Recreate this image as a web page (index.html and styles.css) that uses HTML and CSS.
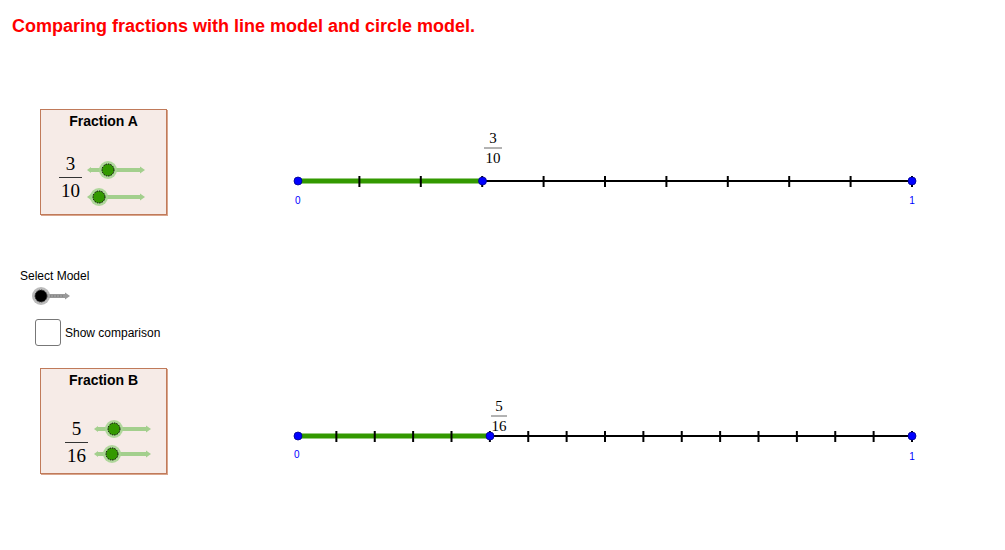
FILE: index.html
```html
<!DOCTYPE html>
<html>
<head>
<meta charset="utf-8">
<link rel="stylesheet" href="styles.css">
</head>
<body>
<div class="applet">
  <h1 class="title">Comparing fractions with line model and circle model.</h1>

  <div class="panel panel-a">
    <div class="panel-title">Fraction A</div>
  </div>
  <div class="frac frac-a"><span class="num">3</span><span class="den">10</span></div>

  <div class="panel panel-b">
    <div class="panel-title">Fraction B</div>
  </div>
  <div class="frac frac-b"><span class="num">5</span><span class="den">16</span></div>

  <div class="label select-label">Select Model</div>
  <div class="check-row">
    <span class="checkbox"></span>
    <span class="label">Show comparison</span>
  </div>

  <svg class="canvas" width="1005" height="550" viewBox="0 0 1005 550">
    <defs>
      <g id="knob">
        <circle r="9" fill="#a9d594" opacity="0.9"/>
        <circle r="6" fill="#339900" stroke="#000" stroke-width="1" stroke-dasharray="1.5 1"/>
      </g>
    </defs>

    <!-- Slider A numerator -->
    <g>
      <line x1="90" y1="170" x2="141" y2="170" stroke="#a3cf8d" stroke-width="4"/>
      <polygon points="87,170 91,167 91,173" fill="#a3cf8d"/>
      <polygon points="145,170 140,166.5 140,173.5" fill="#a3cf8d"/>
      <use href="#knob" x="108" y="170"/>
    </g>
    <!-- Slider A denominator -->
    <g>
      <line x1="90" y1="197" x2="141" y2="197" stroke="#a3cf8d" stroke-width="4"/>
      <polygon points="87,197 91,194 91,200" fill="#a3cf8d"/>
      <polygon points="145,197 140,193.5 140,200.5" fill="#a3cf8d"/>
      <use href="#knob" x="99" y="197"/>
    </g>
    <!-- Slider B numerator -->
    <g>
      <line x1="97" y1="429" x2="146" y2="429" stroke="#a3cf8d" stroke-width="4"/>
      <polygon points="94,429 98,426 98,432" fill="#a3cf8d"/>
      <polygon points="151,429 146,425.5 146,432.5" fill="#a3cf8d"/>
      <use href="#knob" x="114" y="429"/>
    </g>
    <!-- Slider B denominator -->
    <g>
      <line x1="97" y1="454" x2="146" y2="454" stroke="#a3cf8d" stroke-width="4"/>
      <polygon points="94,454 98,451 98,457" fill="#a3cf8d"/>
      <polygon points="151,454 146,450.5 146,457.5" fill="#a3cf8d"/>
      <use href="#knob" x="112" y="454"/>
    </g>

    <!-- Select model slider -->
    <g>
      <line x1="41" y1="296" x2="66" y2="296" stroke="#999" stroke-width="4"/>
      <polygon points="70,296 65,292.5 65,299.5" fill="#999"/>
      <line x1="50" y1="296" x2="64" y2="296" stroke="#777" stroke-width="1" stroke-dasharray="1 2"/>
      <circle cx="41" cy="296" r="9" fill="#aaa" opacity="0.8"/>
      <circle cx="41" cy="296" r="6" fill="#000" stroke="#333" stroke-width="1" stroke-dasharray="1.5 1"/>
    </g>

    <!-- Number line A -->
    <g id="lineA">
      <line x1="298" y1="181" x2="912" y2="181" stroke="#000" stroke-width="2"/>
      <line x1="298" y1="181" x2="482" y2="181" stroke="#339900" stroke-width="5"/>
      <g stroke="#000" stroke-width="2">
        <line x1="359.4" y1="176" x2="359.4" y2="187"/>
        <line x1="420.8" y1="176" x2="420.8" y2="187"/>
        <line x1="482.2" y1="176" x2="482.2" y2="187"/>
        <line x1="543.6" y1="176" x2="543.6" y2="187"/>
        <line x1="605" y1="176" x2="605" y2="187"/>
        <line x1="666.4" y1="176" x2="666.4" y2="187"/>
        <line x1="727.8" y1="176" x2="727.8" y2="187"/>
        <line x1="789.2" y1="176" x2="789.2" y2="187"/>
        <line x1="850.6" y1="176" x2="850.6" y2="187"/>
        <line x1="912" y1="176" x2="912" y2="187"/>
      </g>
      <circle cx="298" cy="181" r="4" fill="#0000ff" stroke="#00008b" stroke-width="0.8"/>
      <circle cx="482.5" cy="181" r="4" fill="#0000ff" stroke="#00008b" stroke-width="0.8"/>
      <circle cx="912" cy="181" r="4" fill="#0000ff" stroke="#00008b" stroke-width="0.8"/>
      <text x="295" y="204" class="axis">0</text>
      <text x="912" y="204" class="axis" text-anchor="middle">1</text>
      <text x="493" y="143" class="ftext" text-anchor="middle">3</text>
      <line x1="484" y1="148" x2="502" y2="148" stroke="#666" stroke-width="1"/>
      <text x="493" y="163" class="ftext" text-anchor="middle">10</text>
    </g>

    <!-- Number line B -->
    <g id="lineB">
      <line x1="298" y1="436" x2="912" y2="436" stroke="#000" stroke-width="2"/>
      <line x1="298" y1="436" x2="490" y2="436" stroke="#339900" stroke-width="5"/>
      <g stroke="#000" stroke-width="2" id="ticksB"></g>
      <circle cx="490" cy="436" r="4" fill="#0000ff" stroke="#00008b" stroke-width="0.8"/>
      <circle cx="298" cy="436" r="4" fill="#0000ff" stroke="#00008b" stroke-width="0.8"/>
      <circle cx="912" cy="436" r="4" fill="#0000ff" stroke="#00008b" stroke-width="0.8"/>
      <text x="294" y="458" class="axis">0</text>
      <text x="912" y="460" class="axis" text-anchor="middle">1</text>
      <text x="499" y="411" class="ftext" text-anchor="middle">5</text>
      <line x1="491" y1="416" x2="507" y2="416" stroke="#666" stroke-width="1"/>
      <text x="499" y="431" class="ftext" text-anchor="middle">16</text>
    </g>
  </svg>
</div>
<script>
  (function () {
    var g = document.getElementById('ticksB');
    var ns = 'http://www.w3.org/2000/svg';
    for (var i = 1; i <= 16; i++) {
      var x = 298 + i * 614 / 16;
      var l = document.createElementNS(ns, 'line');
      l.setAttribute('x1', x); l.setAttribute('x2', x);
      l.setAttribute('y1', 431); l.setAttribute('y2', 442);
      g.appendChild(l);
    }
  })();
</script>
</body>
</html>
```
FILE: styles.css
```css
html, body {
  margin: 0;
  padding: 0;
  background: #fff;
}
body {
  font-family: "Liberation Sans", Arial, sans-serif;
}
.applet {
  position: relative;
  width: 1005px;
  height: 550px;
  overflow: hidden;
}
.title {
  margin: 0;
  padding: 16px 0 0 12px;
  font-size: 18px;
  font-weight: bold;
  color: #ff0000;
  line-height: 21px;
}
.canvas {
  position: absolute;
  left: 0;
  top: 0;
}
.panel {
  position: absolute;
  left: 40px;
  width: 125px;
  height: 104px;
  background: #f6ebe7;
  border: 1px solid #c07a5a;
  box-shadow: 1px 1px 0 #d9a58c;
}
.panel-a { top: 109px; }
.panel-b { top: 368px; }
.panel-title {
  text-align: center;
  font-weight: bold;
  font-size: 14px;
  padding-top: 3px;
  line-height: 16px;
  color: #000;
}
.frac {
  position: absolute;
  display: flex;
  flex-direction: column;
  align-items: center;
  font-family: "Liberation Serif", "Times New Roman", serif;
  font-size: 19px;
  color: #000;
  line-height: 22px;
}
.frac .num {
  padding: 0 3px 2px;
}
.frac .den {
  border-top: 1px solid #333;
  padding: 2px 2px 0;
}
.frac-a { left: 59px; top: 153px; }
.frac-b { left: 65px; top: 418px; }
.label {
  font-size: 12px;
  color: #000;
}
.select-label {
  position: absolute;
  left: 20px;
  top: 269px;
}
.check-row {
  position: absolute;
  left: 35px;
  top: 319px;
  display: flex;
  align-items: center;
  gap: 4px;
}
.checkbox {
  width: 24px;
  height: 25px;
  border: 1px solid #777;
  border-radius: 3px;
  background: #fff;
}
.axis {
  font-family: "Liberation Sans", Arial, sans-serif;
  font-size: 10px;
  fill: #0000ff;
}
.ftext {
  font-family: "Liberation Serif", "Times New Roman", serif;
  font-size: 15px;
  fill: #000;
}
```
